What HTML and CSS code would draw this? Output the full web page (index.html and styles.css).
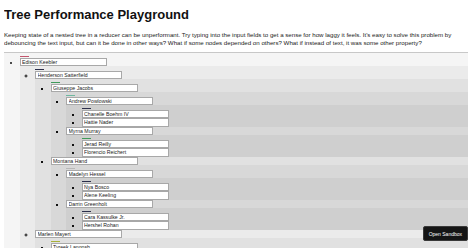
FILE: index.html
```html
<!DOCTYPE html>
<html lang="en">
<head>
    <meta charset="UTF-8">
    <title>Tree Performance Playground</title>
    <link rel="stylesheet" href="styles.css">
</head>
<body>
    <h1>Tree Performance Playground</h1>
    <p class="intro">Keeping state of a nested tree in a reducer can be unperformant. Try typing into the input fields to get a sense for how laggy it feels. It's easy to solve this problem by debouncing the text input, but can it be done in other ways? What if some nodes depended on others? What if instead of text, it was some other property?</p>
    <hr>

    <ul class="tree tick-pink">
        <li><input type="text" value="Edison Keebler">
            <ul class="tree tick-navy">
                <li><input type="text" value="Henderson Satterfield">
                    <ul class="tree tick-green">
                        <li><input type="text" value="Giuseppe Jacobs">
                            <ul class="tree tick-teal">
                                <li><input type="text" value="Andrew Powlowski">
                                    <ul class="tree tick-navy">
                                        <li><input type="text" value="Chanelle Boehm IV"></li>
                                        <li><input type="text" value="Hattie Nader"></li>
                                    </ul>
                                </li>
                                <li><input type="text" value="Myrna Murray">
                                    <ul class="tree tick-green">
                                        <li><input type="text" value="Jerad Reilly"></li>
                                        <li><input type="text" value="Florencio Reichert"></li>
                                    </ul>
                                </li>
                            </ul>
                        </li>
                        <li><input type="text" value="Montana Hand">
                            <ul class="tree tick-grey">
                                <li><input type="text" value="Madelyn Hessel">
                                    <ul class="tree tick-navy">
                                        <li><input type="text" value="Nya Bosco"></li>
                                        <li><input type="text" value="Alene Keeling"></li>
                                    </ul>
                                </li>
                                <li><input type="text" value="Darrin Greenholt">
                                    <ul class="tree tick-navy">
                                        <li><input type="text" value="Cara Kassulke Jr."></li>
                                        <li><input type="text" value="Hershel Rohan"></li>
                                    </ul>
                                </li>
                            </ul>
                        </li>
                    </ul>
                </li>
                <li><input type="text" value="Marlen Mayert">
                    <ul class="tree tick-yellow">
                        <li><input type="text" value="Tyreek Langosh">
                            <ul class="tree tick-navy">
                                <li><input type="text" value="Destiny Kunze"></li>
                                <li><input type="text" value="Orval Wiza"></li>
                            </ul>
                        </li>
                    </ul>
                </li>
            </ul>
        </li>
    </ul>

    <button class="open-sandbox">Open Sandbox</button>
</body>
</html>
```

FILE: styles.css
```css
body {
    font-family: "Liberation Sans", Arial, sans-serif;
    margin: 4px 6px 4px 4px;
    color: #111;
}
h1 {
    font-size: 13px;
    line-height: 14px;
    margin: 4px 0 0;
}
.intro {
    font-size: 6.15px;
    line-height: 8px;
    margin: 9px 0 0;
    color: #222;
}
hr {
    margin: 5px 0 0;
    border: none;
    border-top: 1px solid #c8c8c8;
}
.tree {
    margin: 0;
    padding: 4.5px 0 0 15.5px;
    background-color: rgba(0, 0, 0, 0.04);
}
.tree::before {
    content: "";
    display: block;
    width: 9px;
    height: 1.5px;
    margin-top: -2px;
    margin-bottom: 0.5px;
}
.tick-pink::before { background-color: #c2566e; }
.tick-navy::before { background-color: #2b2d4a; }
.tick-green::before { background-color: #3f9a5a; }
.tick-teal::before { background-color: #6fb8a0; }
.tick-grey::before { background-color: #b8b8b8; }
.tick-yellow::before { background-color: #a9b23a; }
.tree li {
    font-size: 6px;
    line-height: 8.5px;
}
.tree input {
    box-sizing: border-box;
    width: 87px;
    height: 8.5px;
    vertical-align: top;
    margin: 0;
    padding: 0 1.5px;
    border: 1px solid #a8a8a8;
    background: #fff;
    font-family: "Liberation Sans", Arial, sans-serif;
    font-size: 5.2px;
    color: #222;
}
.open-sandbox {
    position: fixed;
    right: 6px;
    bottom: 7px;
    padding: 0 5px;
    height: 15px;
    background-color: #151515;
    color: #fff;
    border: 1px solid #3a3a3a;
    border-radius: 2px;
    font-family: "Liberation Sans", Arial, sans-serif;
    font-size: 5px;
}
```
